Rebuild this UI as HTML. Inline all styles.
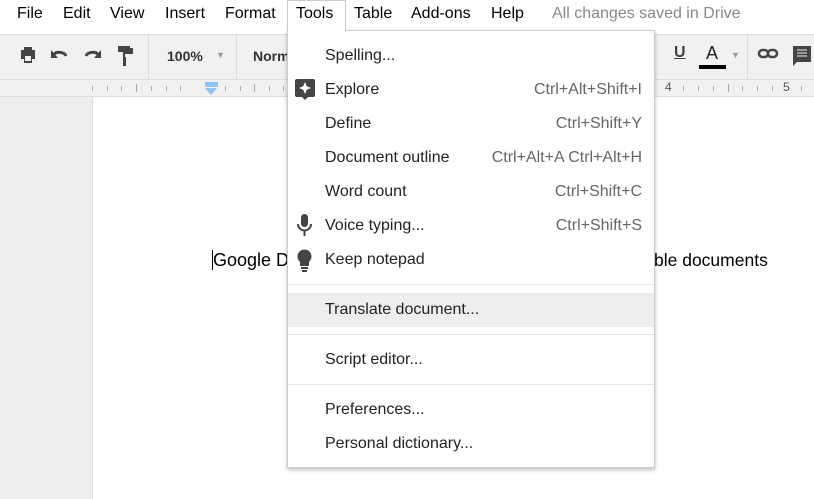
<!DOCTYPE html>
<html><head><style>
*{margin:0;padding:0;box-sizing:border-box}
body{width:814px;height:499px;overflow:hidden;background:#eee;font-family:"Liberation Sans",Arial,sans-serif;position:relative}
.a{position:absolute;white-space:nowrap}
#mb{left:0;top:0;width:814px;height:34px;background:#fff}
.m{top:5px;font-size:16px;color:#000}
#tb{left:0;top:34px;width:814px;height:46px;background:#f1f1f1;border-bottom:1px solid #ddd;border-top:1px solid #ddd}
#ru{left:0;top:80px;width:814px;height:17px;background:#f1f1f1;border-bottom:1px solid #ddd}
#pg{left:92px;top:97px;width:722px;height:402px;background:#fff;border-left:1px solid #ddd}
#menu{left:287px;top:30px;width:368px;height:438px;background:#fff;border:1px solid #ccc;box-shadow:0 2px 4px rgba(0,0,0,.25)}
.it{position:absolute;left:37px;font-size:16px;color:#222}
.sc{position:absolute;right:12px;font-size:16px;color:#666}
.sep{position:absolute;left:0;width:366px;height:1px;background:#e5e5e5}
.tk{position:absolute;top:86px;width:1px;height:5px;background:#aaa}
</style></head><body>
<div id="mb" class="a"></div>
<div class="a m" style="left:17px">File</div>
<div class="a m" style="left:63px">Edit</div>
<div class="a m" style="left:110px">View</div>
<div class="a m" style="left:165px">Insert</div>
<div class="a m" style="left:225px">Format</div>
<div class="a m" style="left:354px">Table</div>
<div class="a m" style="left:411px">Add-ons</div>
<div class="a m" style="left:491px">Help</div>
<div class="a m" style="left:552px;color:#888">All changes saved in Drive</div>
<div id="tb" class="a"></div>
<div class="a" style="left:148px;top:35px;width:1px;height:44px;background:#ddd"></div>
<div class="a" style="left:236px;top:35px;width:1px;height:44px;background:#ddd"></div>
<div class="a" style="left:747px;top:35px;width:1px;height:44px;background:#ddd"></div>
<svg class="a" style="left:18px;top:44px" width="120" height="24" viewBox="0 0 120 24">
<path d="M3 6h14v9h-3v4H6v-4H3z M6 3h8v3H6z" fill="#444"/><rect x="7" y="12" width="6" height="5" fill="#f1f1f1"/>
<path d="M36 10a7 5 0 0 1 12 2" stroke="#444" stroke-width="3" fill="none"/><path d="M33 6v8h7z" fill="#444"/>
<path d="M80 10a7 5 0 0 0 -12 2" stroke="#444" stroke-width="3" fill="none"/><path d="M83 6v8h-7z" fill="#444"/>
<path d="M100 2h12v6h-12z M112 4h3v6h-8v3h-2v-5h7z M105 13h3v9h-3z" fill="#444"/>
</svg>
<div class="a" style="left:167px;top:48px;font-size:14px;font-weight:bold;color:#333">100%</div>
<div class="a" style="left:216px;top:50px;font-size:9px;color:#999">▼</div>
<div class="a" style="left:253px;top:48px;font-size:14px;font-weight:bold;color:#333">Norm</div>
<div class="a" style="left:674px;top:44px;font-size:16px;font-weight:bold;color:#444;text-decoration:underline">U</div>
<div class="a" style="left:706px;top:43px;font-size:18px;color:#222">A</div>
<div class="a" style="left:699px;top:65px;width:27px;height:4px;background:#000"></div>
<div class="a" style="left:731px;top:50px;font-size:9px;color:#999">▼</div>
<svg class="a" style="left:757px;top:46px" width="56" height="20"><rect x="2" y="4" width="9" height="7" rx="3.5" stroke="#444" stroke-width="2.5" fill="none"/><rect x="11" y="4" width="9" height="7" rx="3.5" stroke="#444" stroke-width="2.5" fill="none"/><path d="M36 0h18v16h-14l-4 4z" fill="#444"/><path d="M40 4h10M40 7h10M40 10h10" stroke="#eee"/></svg>
<div id="ru" class="a"></div>
<div class="tk" style="left:92px"></div><div class="tk" style="left:107px"></div><div class="tk" style="left:121px"></div><div class="tk" style="left:136px;top:84px;height:8px"></div><div class="tk" style="left:151px"></div><div class="tk" style="left:166px"></div><div class="tk" style="left:180px"></div><div class="tk" style="left:225px"></div><div class="tk" style="left:240px"></div><div class="tk" style="left:254px;top:84px;height:8px"></div><div class="tk" style="left:269px"></div><div class="tk" style="left:283px"></div>
<div class="a" style="left:205px;top:82px;width:13px;height:5px;background:#8ec3f5"></div>
<div class="a" style="left:205px;top:88px;width:0;height:0;border-left:6.5px solid transparent;border-right:6.5px solid transparent;border-top:7px solid #8ec3f5"></div>
<div class="a" style="left:665px;top:80px;font-size:12px;color:#555">4</div>
<div class="a" style="left:783px;top:80px;font-size:12px;color:#555">5</div>
<div class="tk" style="left:683px"></div><div class="tk" style="left:698px"></div><div class="tk" style="left:713px"></div><div class="tk" style="left:728px;top:84px;height:8px"></div><div class="tk" style="left:742px"></div><div class="tk" style="left:757px"></div><div class="tk" style="left:772px"></div><div class="tk" style="left:801px"></div>
<div id="pg" class="a"></div>
<div class="a" style="left:212px;top:250px;width:1px;height:20px;background:#000"></div>
<div class="a" style="left:213px;top:250px;font-size:18px;color:#000">Google D</div>
<div class="a" style="left:654px;top:250px;font-size:17.5px;color:#000">ble documents</div>
<div class="a" style="left:287px;top:0;width:59px;height:32px;background:#fff;border:1px solid #ccc;border-bottom:none;z-index:2"></div>
<div class="a m" style="left:296px;z-index:3">Tools</div>
<div id="menu" class="a">
<div class="it" style="top:16px">Spelling...</div>
<svg style="position:absolute;left:7px;top:48px" width="20" height="22"><path d="M2 0h16a2 2 0 0 1 2 2v14a2 2 0 0 1-2 2h-5l-3 3-3-3H2a2 2 0 0 1-2-2V2a2 2 0 0 1 2-2z" fill="#444"/><path d="M10 3l1.8 4.2L16 9l-4.2 1.8L10 15l-1.8-4.2L4 9l4.2-1.8z" fill="#fff"/></svg>
<div class="it" style="top:50px">Explore</div><div class="sc" style="top:50px">Ctrl+Alt+Shift+I</div>
<div class="it" style="top:84px">Define</div><div class="sc" style="top:84px">Ctrl+Shift+Y</div>
<div class="it" style="top:118px">Document outline</div><div class="sc" style="top:118px">Ctrl+Alt+A Ctrl+Alt+H</div>
<div class="it" style="top:152px">Word count</div><div class="sc" style="top:152px">Ctrl+Shift+C</div>
<svg style="position:absolute;left:8px;top:183px" width="18" height="24"><rect x="5" y="0" width="7" height="13" rx="3.5" fill="#444"/><path d="M2 10a6.5 6.5 0 0 0 13 0" stroke="#444" stroke-width="2" fill="none"/><rect x="7.5" y="16" width="2" height="6" fill="#444"/></svg>
<div class="it" style="top:186px">Voice typing...</div><div class="sc" style="top:186px">Ctrl+Shift+S</div>
<svg style="position:absolute;left:8px;top:218px" width="18" height="24"><circle cx="8.5" cy="7.5" r="7" fill="#444"/><path d="M4 11h9v6H4z" fill="#444"/><rect x="5" y="18" width="7" height="2" fill="#444"/><rect x="6" y="21" width="5" height="2" fill="#444"/></svg>
<div class="it" style="top:220px">Keep notepad</div>
<div class="sep" style="top:253px"></div>
<div style="position:absolute;left:0;top:262px;width:366px;height:34px;background:#eee"></div>
<div class="it" style="top:270px">Translate document...</div>
<div class="sep" style="top:303px"></div>
<div class="it" style="top:320px">Script editor...</div>
<div class="sep" style="top:353px"></div>
<div class="it" style="top:370px">Preferences...</div>
<div class="it" style="top:404px">Personal dictionary...</div>
</div>
</body></html>
